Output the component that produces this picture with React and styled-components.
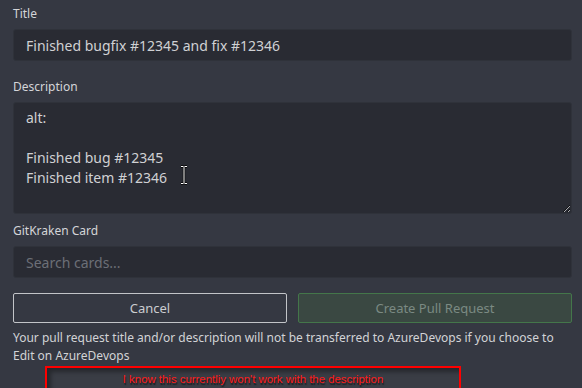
import React from "react";
import styled, { createGlobalStyle } from "styled-components";

const Global = createGlobalStyle`
  html, body { margin: 0; padding: 0; background: #353842; overflow: hidden; }
  body { font-family: "Noto Sans", "Open Sans", sans-serif; }
`;

const Page = styled.div`
  padding: 6px 10px 0 13px;
  display: flex;
  flex-direction: column;
`;

const Label = styled.label`
  display: block;
  font-size: 12px;
  line-height: 16px;
  color: #d4d5d8;
  margin-bottom: 7px;
`;

const Field = styled.div`
  display: flex;
  flex-direction: column;
  margin-bottom: ${(p) => p.$mb || 0}px;
`;

const Input = styled.input`
  box-sizing: border-box;
  width: 100%;
  height: 32px;
  background: #292b33;
  border: 1px solid #2f323a;
  border-radius: 3px;
  padding: 0 12px;
  font-family: "Noto Sans", sans-serif;
  font-size: 14px;
  color: #d0d1d4;
  outline: none;
  &::placeholder { color: #6c6f77; }
`;

const AreaWrap = styled.div`
  position: relative;
  display: flex;
`;

const Area = styled.textarea`
  box-sizing: border-box;
  width: 100%;
  height: 112px;
  background: #292b33;
  border: 1px solid #2f323a;
  border-radius: 3px;
  padding: 5px 12px;
  font-family: "Noto Sans", sans-serif;
  font-size: 14px;
  line-height: 20px;
  color: #d0d1d4;
  resize: vertical;
  outline: none;
`;

const Cursor = styled.svg`
  position: absolute;
  left: 167px;
  top: 63px;
  pointer-events: none;
`;

const Buttons = styled.div`
  display: grid;
  grid-template-columns: 1fr 1fr;
  gap: 11px;
  margin-top: 15px;
`;

const Button = styled.button`
  box-sizing: border-box;
  height: 30px;
  border-radius: 2px;
  font-family: "Noto Sans", sans-serif;
  font-size: 13px;
  background: ${(p) => (p.$primary ? "#3a4842" : "transparent")};
  border: 1px solid ${(p) => (p.$primary ? "#44764a" : "#c2c4c8")};
  color: ${(p) => (p.$primary ? "#7b8a83" : "#cbccd0")};
`;

const Info = styled.p`
  margin: 6px 0 0;
  font-size: 12px;
  line-height: 18px;
  color: #d2d3d6;
`;

const Note = styled.div`
  box-sizing: border-box;
  margin: 1px 0 0 32px;
  width: 416px;
  height: 40px;
  border: 2px solid #ff0000;
  background: #3a3d45;
  box-shadow: inset 4px 4px 4px rgba(0, 0, 0, 0.35);
  text-align: center;
  font-family: "Liberation Sans", Arial, sans-serif;
  font-size: 11.4px;
  line-height: 20px;
  padding-top: 1px;
  color: #ff1a1a;
  text-shadow: 1px 2px 1px rgba(0, 0, 0, 0.6);
`;

export default function App() {
  return (
    <>
      <Global />
      <Page>
        <Field $mb={18}>
          <Label>Title</Label>
          <Input defaultValue="Finished bugfix #12345 and fix #12346" />
        </Field>
        <Field $mb={9}>
          <Label>Description</Label>
          <AreaWrap>
            <Area defaultValue={"alt:\n\nFinished bug #12345\nFinished item #12346"} />
            <Cursor width="8" height="20" viewBox="0 0 8 20">
              <path d="M1 1.5h2.5M4.5 1.5H7M4 2v16M1 18.5h2.5M4.5 18.5H7" stroke="#000" strokeWidth="2.4" fill="none" />
              <path d="M1 1.5h2.5M4.5 1.5H7M4 2v16M1 18.5h2.5M4.5 18.5H7" stroke="#fff" strokeWidth="1" fill="none" />
            </Cursor>
          </AreaWrap>
        </Field>
        <Field>
          <Label>GitKraken Card</Label>
          <Input placeholder="Search cards..." />
        </Field>
        <Buttons>
          <Button>Cancel</Button>
          <Button $primary>Create Pull Request</Button>
        </Buttons>
        <Info>
          Your pull request title and/or description will not be transferred to AzureDevops if you choose to Edit on AzureDevops
        </Info>
        <Note>I know this currentliy won't work with the description</Note>
      </Page>
    </>
  );
}
